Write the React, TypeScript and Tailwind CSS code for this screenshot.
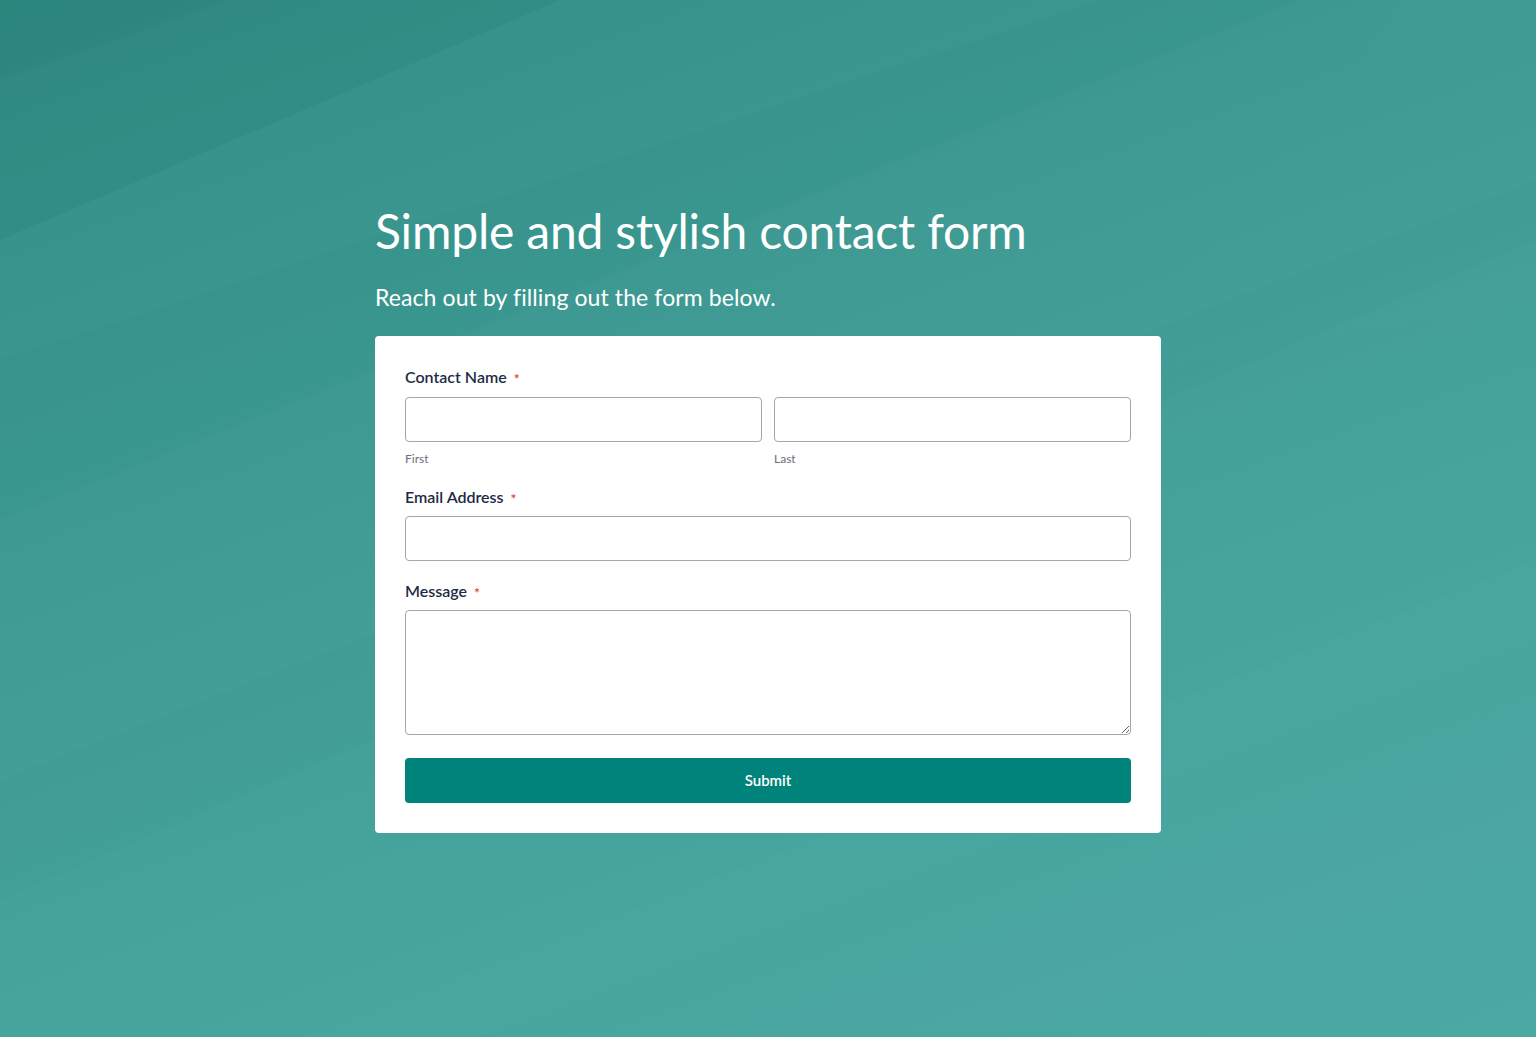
import type { ReactNode } from 'react'

const labelClasses = 'flex items-center gap-[7px] text-[16px] leading-5 font-semibold text-[#1e2a45]'
const inputClasses =
  'block w-full rounded-[4px] border border-[#a3a6ad] bg-white px-3 text-[15px] text-[#1e2a45] outline-none focus:border-[#00837a]'

function Required() {
  return <span className="translate-y-[2px] text-[14px] leading-none text-[#e0412f]">*</span>
}

function Field({ label, children }: { label: string; children: ReactNode }) {
  return (
    <div>
      <label className={labelClasses}>
        {label}
        <Required />
      </label>
      <div className="mt-[9px]">{children}</div>
    </div>
  )
}

// soft diagonal streaks laid over the teal gradient
function Backdrop() {
  return (
    <svg
      className="pointer-events-none absolute inset-0 h-full w-full"
      viewBox="0 0 1536 1037"
      preserveAspectRatio="none"
    >
      <polygon points="0,0 560,0 0,240" fill="#1f7a72" opacity="0.22" />
      <polygon points="0,0 230,0 0,80" fill="#1f7a72" opacity="0.18" />
      <polygon points="0,360 1100,0 1300,0 0,520" fill="#2a8a80" opacity="0.12" />
      <polygon points="0,780 1536,180 1536,240 0,900" fill="#2d8b82" opacity="0.08" />
      <polygon points="300,1037 1536,560 1536,640 480,1037" fill="#5ab3ac" opacity="0.1" />
      <polygon points="700,1037 1536,700 1536,1037" fill="#55b0a9" opacity="0.12" />
      <polygon points="1400,0 1536,0 1536,300 1100,380" fill="#55aea7" opacity="0.06" />
    </svg>
  )
}

export default function App() {
  return (
    <div className="relative min-h-[1037px] overflow-hidden bg-[linear-gradient(160deg,#338d86_0%,#3e9a93_35%,#47a49d_65%,#4ca8a2_100%)] font-['Lato',sans-serif]">
      <Backdrop />
      <div className="relative mx-auto w-[786px] pt-[202px]">
        <h1 className="text-[48px] leading-[58px] font-normal tracking-[-0.2px] text-white">
          Simple and stylish contact form
        </h1>
        <p className="mt-[23px] text-[23px] leading-7 tracking-[0.1px] text-white">
          Reach out by filling out the form below.
        </p>

        <form
          className="mt-[25px] rounded-[4px] bg-white px-[30px] pt-[31px] pb-[30px]"
          onSubmit={(e) => e.preventDefault()}
        >
          <div>
            <label className={labelClasses}>
              Contact Name
              <Required />
            </label>
            <div className="mt-[10px] grid grid-cols-2 gap-3">
              <div>
                <input type="text" className={`${inputClasses} h-[45px]`} />
                <span className="mt-[9px] block text-xs leading-4 text-[#6b6e75]">First</span>
              </div>
              <div>
                <input type="text" className={`${inputClasses} h-[45px]`} />
                <span className="mt-[9px] block text-xs leading-4 text-[#6b6e75]">Last</span>
              </div>
            </div>
          </div>

          <div className="mt-[20px]">
            <Field label="Email Address">
              <input type="email" className={`${inputClasses} h-[45px]`} />
            </Field>
          </div>

          <div className="mt-[20px]">
            <Field label="Message">
              <textarea className={`${inputClasses} h-[125px] py-2`} />
            </Field>
          </div>

          <button
            type="submit"
            className="mt-[23px] block h-[45px] w-full cursor-pointer rounded-[4px] bg-[#00837a] text-[15px] font-semibold text-white hover:bg-[#006f67]"
          >
            Submit
          </button>
        </form>
      </div>
    </div>
  )
}
